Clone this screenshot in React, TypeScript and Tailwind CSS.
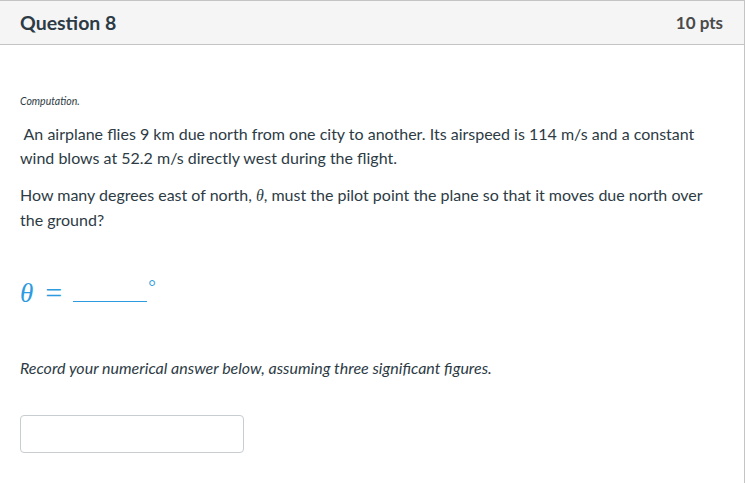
export default function App() {
  return (
    <div className="w-[747px] h-[483px] bg-white font-['Lato',sans-serif] text-[#2d3b45]">
      <div className="w-[745px] h-[483px] border-r border-t border-[#c4c4c4]">
        <div className="h-[44px] flex items-center justify-between pl-5 pr-[21px] bg-[#f5f5f5] border-b border-[#c4c4c4]">
          <h2 className="text-[19.5px] font-bold leading-none">Question 8</h2>
          <span className="text-[17px] font-bold text-[#4a4a4a] leading-none">10 pts</span>
        </div>
        <div className="px-5">
          <p className="mt-[49px] text-[10.5px] leading-[14px] italic">Computation.</p>
          <p className="mt-[14px] text-[16px] leading-[24px]">
            &nbsp;An airplane flies 9 km due north from one city to another. Its airspeed is 114 m/s and a constant wind blows at 52.2 m/s directly west during the flight.
          </p>
          <p className="mt-[13px] text-[16px] leading-[24px]">
            How many degrees east of north, <span className="font-['Liberation_Serif',serif] italic">θ</span>, must the pilot point the plane so that it moves due north over the ground?
          </p>
          <div className="mt-[46px] h-[30px] flex items-center text-[#2c9be0] font-['Liberation_Serif',serif]">
            <span className="italic text-[27px] leading-none">θ</span>
            <span className="ml-[12px] text-[30px] leading-none">=</span>
            <span className="ml-[11px] w-[74px] h-[1px] bg-[#2c9be0] mt-[17px]" />
            <span className="text-[19px] leading-none -mt-[14px] ml-[1px]">°</span>
          </div>
          <p className="mt-[48px] text-[16px] leading-[24px] italic">
            Record your numerical answer below, assuming three significant figures.
          </p>
          <input
            type="text"
            className="mt-[35px] block w-[224px] h-[38px] border border-[#c7cdd1] rounded-[4px] outline-none"
          />
        </div>
      </div>
    </div>
  );
}
